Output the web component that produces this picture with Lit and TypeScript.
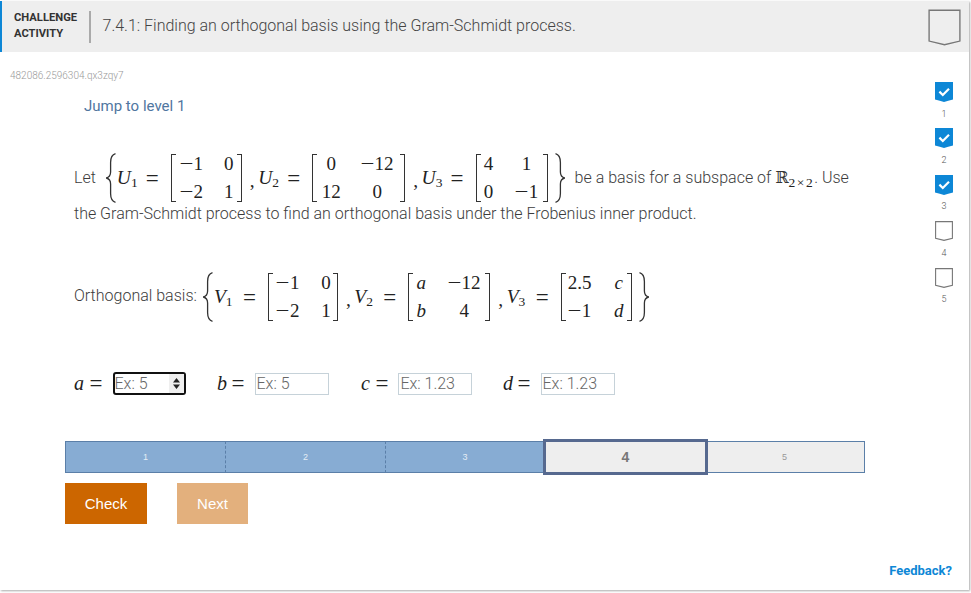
import { LitElement, html, css, svg } from "lit";
import { customElement } from "lit/decorators.js";

const brace = (right = false) => html`<svg class="brace ${right ? "flip" : ""}" viewBox="0 0 12 50" width="12" height="50" aria-hidden="true">
  <path d="M10.5 .7C6.6 1.8 5.6 5 5.6 9.5V19C5.6 22.6 4.2 24.3 1.2 25C4.2 25.7 5.6 27.4 5.6 31V40.5C5.6 45 6.6 48.2 10.5 49.3" fill="none" stroke="#333" stroke-width="1.3"/>
</svg>`;

const matrix = (cells: unknown[], c1: number, c2: number, w: number) => {
  const a = 2 * (c1 - 5);
  const b = 2 * (w - 5 - c2);
  const g = c2 - c1 - a / 2 - b / 2;
  return html`<span class="matrix" style="width:${w}px;grid-template-columns:${a}px ${b}px;column-gap:${g}px">
    ${cells.map((c) => html`<span class="cell">${c}</span>`)}
  </span>`;
};

const v = (s: string) => html`<i>${s}</i>`;
const neg = (s: string) => html`<span class="minus">−</span>${s}`;
const named = (n: string, i: string) => html`<span class="named"><i>${n}</i><sub>${i}</sub></span>`;

const flag = (done: boolean, big = false) => html`<svg class="flag ${big ? "big" : ""}" viewBox="0 0 18 20" aria-hidden="true">
  ${done
    ? svg`<path d="M0 0H18V17.6Q13 19 9 20Q5 19 0 17.6Z" fill="#0d87d6"/><path d="M4.4 9.6L7.8 13L14 6.8" fill="none" stroke="#fff" stroke-width="2.2"/>`
    : svg`<path d="M.6 .6H17.4V17.4L9 19.4L.6 17.4Z" fill="none" stroke="#777" stroke-width="${big ? 0.75 : 1.1}"/>`}
</svg>`;

@customElement("app-root")
export class AppRoot extends LitElement {
  static styles = css`
    :host { display: block; width: 971px; height: 593px; overflow: hidden; background: #fff; font-family: Roboto, sans-serif; color: #333; }
    .card { width: 969px; height: 589px; margin-top: 1px; background: #fff; box-shadow: 1px 1px 2px #aaa; display: flex; flex-direction: column; }
    header { height: 51px; flex: none; background: #eee; border-left: 2px solid #0d87d6; display: flex; align-items: center; box-sizing: border-box; padding-left: 12px; }
    .kind { width: 75px; font-size: 11.2px; font-weight: 700; line-height: 16px; color: #333; padding-bottom: 1px; }
    .divider { width: 1.5px; height: 32px; background: #aaa; margin-right: 12px; }
    h1 { margin: 0; font-size: 16px; font-weight: 300; color: #444; flex: 1; padding-bottom: 3px; }
    .flag { width: 18px; height: 20px; display: block; }
    .flag.big { width: 33px; height: 37px; margin: 2px 8px 0 0; }
    .body { flex: 1; display: flex; min-height: 0; }
    main { flex: 1; min-width: 0; display: flex; flex-direction: column; }
    .rail { width: 44px; flex: none; padding: 30px 6px 0 0; display: flex; flex-direction: column; align-items: center; box-sizing: border-box; }
    .step { height: 46.4px; flex: none; display: flex; flex-direction: column; align-items: center; font-size: 9px; color: #555; font-weight: 300; gap: 6.5px; }
    .id { font-size: 10px; font-weight: 300; color: #999; margin: 18px 0 0 10px; line-height: 11px; }
    .jump { font-size: 15px; color: #50769f; font-weight: 400; margin: 16px 0 0 84px; line-height: 18px; }
    .line { margin-left: 74px; display: flex; align-items: center; height: 48px; font-size: 16px; font-weight: 300; color: #3c3c3c; white-space: nowrap; }
    .first { margin-top: 39px; }
    .first > .label, .first > .after { padding-bottom: 1px; }
    .second > .label { padding-bottom: 3px; }
    .text2 { margin-left: 74px; font-size: 16px; font-weight: 300; line-height: 24px; color: #3c3c3c; white-space: nowrap; }
    .second { margin-top: 47px; }
    .m { font-family: "Liberation Serif", serif; font-size: 19.5px; font-weight: 400; display: inline-flex; align-items: center; color: #222; }
    .m1 { margin-left: 9px; }
    .m2 { margin-left: 5px; }
    .after { margin-left: 9px; }
    i { font-style: italic; }
    .named { display: inline-flex; align-items: baseline; width: 23px; flex: none; }
    sub { font-size: 13.5px; line-height: 0; vertical-align: baseline; position: relative; top: 3px; }
    .eq { margin: 0 12px 0 6px; font-size: 23px; width: 13px; line-height: 1; }
    .comma { margin: 0 3.5px 0 8px; position: relative; top: 3px; }
    .brace { flex: none; display: block; }
    .brace.flip { transform: scaleX(-1); margin-left: 6px; }
    .matrix { display: inline-grid; box-sizing: border-box; padding: 0 5px; height: 48px; grid-auto-rows: 28px; align-content: center; justify-items: center; position: relative; font-size: 19px; }
    .matrix::before, .matrix::after { content: ""; position: absolute; top: 0; bottom: 0; width: 5px; border: 1.2px solid #333; box-sizing: border-box; }
    .matrix::before { left: 0; border-right: 0; }
    .matrix::after { right: 0; border-left: 0; }
    .cell { line-height: 28px; white-space: nowrap; }
    .minus { display: inline-block; transform: scaleX(1.3); margin: 0 1.8px 0 1.2px; }
    .bb { font-family: "DejaVu Serif", serif; font-size: 16px; color: #333; }
    .dim { font-family: "Liberation Serif", serif; font-size: 13.5px; font-weight: 400; letter-spacing: 1.5px; top: 4px; color: #222; }
    .answers { margin: 51px 0 0 74px; display: flex; align-items: center; height: 23px; }
    .answer { display: flex; align-items: center; flex: none; }
    .answer .m { font-size: 20px; }
    .answer .eq { margin: 0 10px 0 5.5px; }
    .answer.snug .eq { margin-left: 4.5px; }
    .answer input { width: 74px; height: 22px; box-sizing: border-box; border: 1px solid #c6d2d9; background: #fff; font: 300 16px Roboto, sans-serif; color: #333; padding: 0 0 0 1px; margin: 0; outline: none; }
    input::placeholder { color: #666; opacity: 1; }
    .field { position: relative; display: block; }
    .answer .field input { width: 73px; height: 23px; border: 2px solid #111; border-radius: 3px; padding-left: 0; }
    .spin { position: absolute; top: 2px; right: 2px; width: 15px; height: 19px; background: #efefef; display: flex; align-items: center; justify-content: center; }
    .a1 { width: 143px; }
    .a2 { width: 144px; }
    .a3 { width: 142px; }
    .progress { margin: 46px 0 0 65px; width: 800px; height: 32px; box-sizing: border-box; display: flex; }
    .seg { box-sizing: border-box; height: 32px; width: 160px; flex: none; display: flex; align-items: center; justify-content: center; font: 9px "Liberation Sans", sans-serif; border: 1px solid #5b7fa8; border-width: 1.5px 0; background: #87acd3; color: #e4ecf5; }
    .seg.sep { border-right: 1px dashed #5b7fa8; }
    .seg.start { width: 161px; border-left: 1.5px solid #5b7fa8; }
    .seg.last { width: 158px; }
    .seg.cur { width: 165px; height: 36px; margin: -2px 0 -2px -1px; border: 3px solid #56698f; background: #eee; color: #777; font-weight: 700; font-size: 14px; position: relative; }
    .seg.todo { width: 157px; background: #eee; color: #999; border-right: 1.5px solid #5b7fa8; padding-right: 3px; }
    .actions { margin: 10px 0 0 65px; display: flex; gap: 30px; }
    button { height: 41px; border: 0; padding: 0; color: #fff; font: 15px "Liberation Sans", sans-serif; }
    .check { width: 82px; background: #cc6600; }
    .next { width: 71px; background: #e3b07d; }
    footer { flex: none; padding: 0 17px 12px 0; font-size: 13px; font-weight: 700; color: #0d87d6; text-align: right; line-height: 15px; }
  `;

  render() {
    return html`<div class="card">
      <header>
        <div class="kind">CHALLENGE<br />ACTIVITY</div>
        <div class="divider"></div>
        <h1>7.4.1: Finding an orthogonal basis using the Gram-Schmidt process.</h1>
        ${flag(false, true)}
      </header>
      <div class="body">
        <main>
          <div class="id">482086.2596304.qx3zqy7</div>
          <div class="jump">Jump to level 1</div>
          <div class="line first">
            <span class="label">Let</span>
            <span class="m m1">
              ${brace()}${named("U", "1")}<span class="eq">=</span>
              ${matrix([neg("1"), "0", neg("2"), "1"], 20.5, 58, 71)}
              <span class="comma">,</span>${named("U", "2")}<span class="eq">=</span>
              ${matrix(["0", neg("12"), "12", "0"], 19, 65, 93)}
              <span class="comma">,</span>${named("U", "3")}<span class="eq">=</span>
              ${matrix(["4", "1", "0", neg("1")], 13, 51, 72)}
              ${brace(true)}
            </span>
            <span class="after">be a basis for a subspace of <span class="bb">ℝ</span><sub class="dim">2×2</sub>. Use</span>
          </div>
          <div class="text2">the Gram-Schmidt process to find an orthogonal basis under the Frobenius inner product.</div>
          <div class="line second">
            <span class="label">Orthogonal basis:</span>
            <span class="m m2">
              ${brace()}${named("V", "1")}<span class="eq">=</span>
              ${matrix([neg("1"), "0", neg("2"), "1"], 20, 58, 70)}
              <span class="comma">,</span>${named("V", "2")}<span class="eq">=</span>
              ${matrix([v("a"), neg("12"), v("b"), "4"], 13, 56, 82)}
              <span class="comma">,</span>${named("V", "3")}<span class="eq">=</span>
              ${matrix(["2.5", v("c"), neg("1"), v("d")], 19, 58, 71)}
              ${brace(true)}
            </span>
          </div>
          <div class="answers">
            <div class="answer a1"><span class="m"><i>a</i><span class="eq">=</span></span>
              <span class="field"><input placeholder="Ex: 5" aria-label="a" />
                <span class="spin"><svg width="9" height="13" viewBox="0 0 9 13"><path d="M4.5 1L8 5.5H1ZM4.5 12L8 7.5H1Z" fill="#222"/></svg></span>
              </span></div>
            <div class="answer a2 snug"><span class="m"><i>b</i><span class="eq">=</span></span><input placeholder="Ex: 5" aria-label="b" /></div>
            <div class="answer a3"><span class="m"><i>c</i><span class="eq">=</span></span><input placeholder="Ex: 1.23" aria-label="c" /></div>
            <div class="answer snug"><span class="m"><i>d</i><span class="eq">=</span></span><input placeholder="Ex: 1.23" aria-label="d" /></div>
          </div>
          <div class="progress">
            <div class="seg start sep">1</div>
            <div class="seg sep">2</div>
            <div class="seg last">3</div>
            <div class="seg cur">4</div>
            <div class="seg todo">5</div>
          </div>
          <div class="actions">
            <button class="check">Check</button>
            <button class="next">Next</button>
          </div>
        </main>
        <div class="rail">
          ${[true, true, true, false, false].map((d, i) => html`<div class="step">${flag(d)}<span>${i + 1}</span></div>`)}
        </div>
      </div>
      <footer>Feedback?</footer>
    </div>`;
  }
}
